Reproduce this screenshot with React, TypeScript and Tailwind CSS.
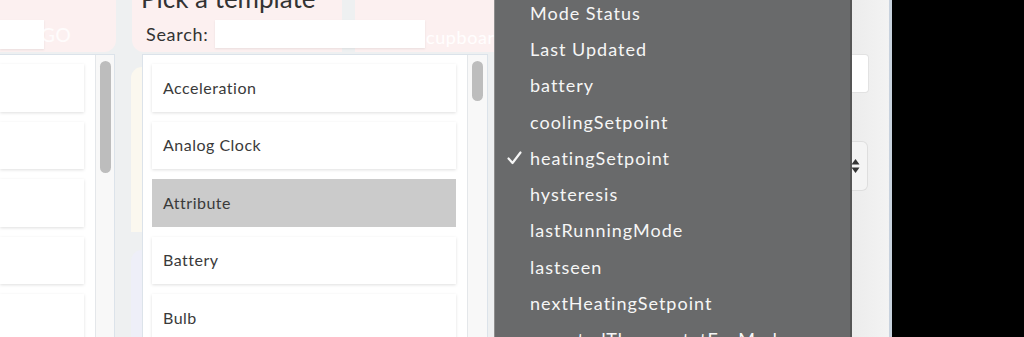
import React from 'react';

const templates = ['Acceleration', 'Analog Clock', 'Attribute', 'Battery', 'Bulb'];

const attributes = [
  'Mode Status',
  'Last Updated',
  'battery',
  'coolingSetpoint',
  'heatingSetpoint',
  'hysteresis',
  'lastRunningMode',
  'lastseen',
  'nextHeatingSetpoint',
  'reportedThermostatFanMode',
];

const Card: React.FC<{ label?: string; selected?: boolean }> = ({ label, selected }) => (
  <div
    className={`flex h-[47.5px] shrink-0 items-center pl-[11px] text-[16px] tracking-[0.5px] text-[#3a3a3a] ${
      selected ? 'bg-[#cbcbcb]' : 'bg-white shadow-[0_1px_3px_rgba(0,0,0,0.13)]'
    }`}
  >
    {label}
  </div>
);

const Scrollbar: React.FC<{ thumbHeight: string; className?: string }> = ({ thumbHeight, className }) => (
  <div className={`flex shrink-0 justify-center border-l border-[#e4e7ea] bg-[#f8f8f8] pt-[6px] ${className ?? ''}`}>
    <div className={`w-[11px] rounded-full bg-[#bdbdbd] ${thumbHeight}`} />
  </div>
);

export default function App() {
  return (
    <div className="flex h-[337px] w-[1024px] overflow-hidden bg-[#eef0f1] font-['Lato','Noto_Sans',sans-serif]">
      {/* board + template picker */}
      <div className="flex w-[494px] shrink-0 flex-col">
        <div className="flex h-[54px] shrink-0">
          <div className="flex h-[52px] w-[116px] shrink-0 rounded-br-xl bg-[#fcf0f0] pt-[20px]">
            <div className="h-[29px] w-[44px] bg-white shadow-[0_1px_2px_rgba(0,0,0,0.08)]" />
            <span className="-ml-[3px] mt-[5px] text-[19px] leading-[20px] tracking-[0.5px] text-white/80">GO</span>
          </div>
          <div className="w-[16px] shrink-0" />
          <div className="h-[52px] w-[210px] shrink-0 rounded-bl-xl bg-[#fcf0f0] pl-[9px]">
            <div className="-mt-[17px] whitespace-nowrap text-[26px] leading-[30px] text-[#333]">Pick a template</div>
            <div className="mt-[7px] flex h-[28px] items-center pl-[5px]">
              <span className="w-[69px] shrink-0 text-[18px] tracking-[0.7px] text-[#333]">Search:</span>
              <div className="relative z-10 h-[28px] w-[210px] shrink-0 bg-white shadow-[0_1px_2px_rgba(0,0,0,0.08)]" />
            </div>
          </div>
          <div className="w-[13px] shrink-0" />
          <div className="h-[52px] flex-1 overflow-hidden whitespace-nowrap bg-[#fcf0f0] pl-[71px] pt-[26px] text-[18px] leading-[22px] tracking-[0.6px] text-white/90">
            cupboard
          </div>
        </div>

        <div className="flex min-h-0 flex-1">
          {/* board list */}
          <div className="flex w-[115px] shrink-0 border-t border-r border-[#dce3ea] bg-white">
            <div className="flex w-[95px] shrink-0 flex-col gap-[10px] pt-[9px] pr-[11px]">
              {[0, 1, 2, 3, 4].map((i) => (
                <Card key={i} />
              ))}
            </div>
            <Scrollbar thumbHeight="h-[112px]" className="w-[19px]" />
          </div>

          {/* background layers peeking through */}
          <div className="flex w-[27px] shrink-0 flex-col pl-[16px] pt-[13px]">
            <div className="h-[165px] rounded-tl-xl bg-[#fbf8ef]" />
            <div className="mt-[18px] flex-1 rounded-tl-xl bg-[#eeeff8]" />
          </div>

          {/* template list */}
          <div className="flex w-[346px] shrink-0 border-t border-l border-r border-[#dce3ea] bg-white">
            <div className="flex w-[324px] shrink-0 flex-col gap-[10px] pt-[9px] pl-[9px] pr-[11px]">
              {templates.map((t) => (
                <Card key={t} label={t} selected={t === 'Attribute'} />
              ))}
            </div>
            <Scrollbar thumbHeight="h-[40px]" className="w-[20px]" />
          </div>
        </div>
      </div>

      {/* attribute dropdown */}
      <div className="flex w-[358px] shrink-0 flex-col border-l border-r-2 border-l-[#8e8e8e] border-r-[#555] bg-[#696a6b]">
        <div className="-mt-[5px] flex flex-col">
          {attributes.map((a) => (
            <div key={a} className="flex h-[36.3px] shrink-0 items-center whitespace-nowrap text-[18px] tracking-[1px] text-[#f6f6f6]">
              <span className="flex w-[35px] shrink-0 pl-[12px]">
                {a === 'heatingSetpoint' && (
                  <svg width="15" height="14" viewBox="0 0 15 14">
                    <path d="M1.5 7.5 L5.5 12 L13.5 1.5" fill="none" stroke="#f6f6f6" strokeWidth="2.2" strokeLinecap="round" strokeLinejoin="round" />
                  </svg>
                )}
              </span>
              {a}
            </div>
          ))}
        </div>
      </div>

      {/* settings panel edge */}
      <div className="flex w-[37px] shrink-0 flex-col bg-gradient-to-r from-[#ececec] to-[#f3f3f3]">
        <div className="mt-[54px] h-[39px] w-[17px] rounded-r-sm border border-l-0 border-[#e2e2e2] bg-white" />
        <div className="mt-[48px] flex h-[50px] w-[16px] items-center rounded-r-md border border-l-0 border-[#dedede] bg-[#f4f4f4]">
          <svg width="9" height="16" viewBox="0 0 9 16" className="-ml-[1px]">
            <path d="M4.5 1 L8.5 6.5 H0.5 Z" fill="#333" />
            <path d="M4.5 15 L8.5 9.5 H0.5 Z" fill="#333" />
          </svg>
        </div>
      </div>
      <div className="w-[3px] shrink-0 bg-[#c8d2de]" />
      <div className="flex-1 bg-black" />
    </div>
  );
}
